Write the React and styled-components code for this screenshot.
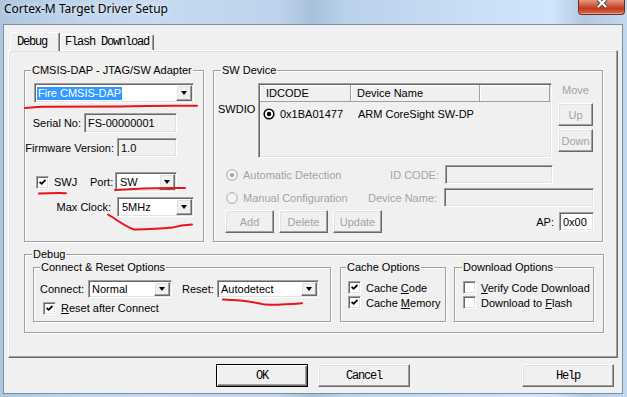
import React from 'react';
import styled, { createGlobalStyle, css } from 'styled-components';

const GlobalStyle = createGlobalStyle`
	* { box-sizing: border-box; }
	body { margin: 0; background: #fff; }
`;

const sunken = css`
	border: 1px solid;
	border-color: #a0a0a0 #fff #fff #a0a0a0;
	box-shadow: inset 1px 1px #696969, inset -1px -1px #e3e3e3;
`;

const raised = css`
	border: 1px solid;
	border-color: #fff #696969 #696969 #fff;
	box-shadow: inset -1px -1px #a0a0a0, inset 1px 1px #e3e3e3;
`;

const Window = styled.div`
	position: relative;
	width: 627px;
	height: 397px;
	display: flex;
	flex-direction: column;
	padding: 0 4px 3px 3px;
	overflow: hidden;
	background: linear-gradient(90deg, #aec5df 0%, #bcd2ea 10%, #c6dbf1 24%, #bfd4ec 44%, #a8c0dc 50%, #bad1ea 55%, #c9def5 74%, #d1e6fa 88%, #b3c9e2 93%, #c3d8ef 100%);
	font-family: "Liberation Sans", Arial, sans-serif;
	font-size: 11px;
	color: #000;
`;

const TitleBar = styled.div`
	height: 24px;
	display: flex;
	align-items: flex-start;
	justify-content: space-between;
	margin-right: -2px;
`;

const Title = styled.div`
	font-family: "Noto Sans", sans-serif;
	font-size: 12px;
	line-height: 16px;
	margin: 1px 0 0 1px;
	text-shadow: 0 0 6px rgba(255, 255, 255, .9);
`;

const CloseButton = styled.div`
	width: 47px;
	height: 15px;
	display: flex;
	justify-content: center;
	align-items: flex-start;
	overflow: hidden;
	border: 1px solid #6e2b22;
	border-top: none;
	border-radius: 0 0 4px 4px;
	background: linear-gradient(#e29a86 0%, #d4583f 40%, #c13b22 60%, #d86a4a 100%);
	box-shadow: inset 0 -1px rgba(255, 200, 180, .6);
`;

const Client = styled.div`
	flex: 1;
	display: flex;
	flex-direction: column;
	padding: 7px 4px 0 4px;
	background: #f0f0f0;
	border: 1px solid #7a8ea6;
`;

const TabStrip = styled.div`
	height: 18px;
	display: flex;
	align-items: flex-end;
	padding-left: 2px;
`;

const Tab = styled.div`
	position: relative;
	z-index: ${p => p.$active ? 2 : 1};
	width: ${p => p.$w}px;
	height: ${p => p.$active ? 19 : 16}px;
	margin-bottom: ${p => p.$active ? -1 : 0}px;
	padding: ${p => p.$active ? '2px 0 0 6px' : '0 0 0 4px'};
	background: #f0f0f0;
	border: 1px solid;
	border-bottom: none;
	border-color: #fff #696969 transparent #fff;
	border-radius: 2px 2px 0 0;
	box-shadow: inset -1px 0 #a0a0a0;
	font-family: "Liberation Mono", monospace;
	font-size: 12px;
	letter-spacing: -1.2px;
	line-height: 14px;
	white-space: nowrap;
`;

const TabPanel = styled.div`
	height: 308px;
	display: flex;
	flex-direction: column;
	padding: 12px 0 0 15px;
	${raised};
`;

const TopRow = styled.div`
	display: flex;
	gap: 9px;
`;

const Group = styled.fieldset`
	margin: ${p => p.$mt || 0}px 0 0 0;
	min-width: 0;
	width: ${p => p.$w}px;
	height: ${p => p.$h}px;
	padding: ${p => p.$pad};
	border: 1px solid #a0a0a0;
	box-shadow: inset 1px 1px #fff, 1px 1px #fff;
	flex-shrink: 0;
`;

const Legend = styled.legend`
	padding: 0 1px;
	margin-left: ${p => p.$ml || 0}px;
	line-height: ${p => p.$lh || 14}px;
	background: #f0f0f0;
	white-space: nowrap;
`;

const FormRow = styled.div`
	display: flex;
	align-items: ${p => p.$align || 'center'};
	height: ${p => p.$h}px;
	margin-top: ${p => p.$mt || 0}px;
	padding-right: ${p => p.$pr || 0}px;
	gap: ${p => p.$gap || 0}px;
`;

const Label = styled.span`
	flex-shrink: 0;
	width: ${p => p.$w ? `${p.$w}px` : 'auto'};
	margin-left: ${p => p.$ml || 0}px;
	padding-right: ${p => p.$pr || 0}px;
	text-align: ${p => p.$right ? 'right' : 'left'};
	line-height: 14px;
	white-space: nowrap;
	color: ${p => p.$off ? '#a3a3a3' : '#000'};
`;

const FillLabel = styled(Label)`
	flex: 1;
	text-align: right;
`;

const Combo = styled.div`
	flex-shrink: 0;
	width: ${p => p.$w}px;
	height: ${p => p.$h || 20}px;
	margin-left: ${p => p.$ml || 0}px;
	display: flex;
	align-items: center;
	padding: 1px;
	background: #fff;
	${sunken};
`;

const ComboValue = styled.span`
	flex: 1;
	padding-left: ${p => p.$pl ?? 3}px;
	line-height: 13px;
	white-space: nowrap;
	overflow: hidden;
`;

const Selection = styled.span`
	display: inline-block;
	padding: 0 1px;
	background: #3399ff;
	color: #fff;
`;

const DropButton = styled.span`
	width: 16px;
	align-self: stretch;
	display: flex;
	align-items: center;
	justify-content: center;
	background: #f0f0f0;
	${raised};

	&::after {
		content: '';
		border-left: 3.5px solid transparent;
		border-right: 3.5px solid transparent;
		border-top: 4px solid #000;
	}
`;

const TextBox = styled.div`
	flex-shrink: 0;
	width: ${p => p.$w}px;
	height: ${p => p.$h || 20}px;
	display: flex;
	align-items: center;
	padding-left: 3px;
	background: ${p => p.$white ? '#fff' : '#f0f0f0'};
	white-space: nowrap;
	${sunken};
`;

const CheckBox = styled.span`
	flex-shrink: 0;
	width: 13px;
	height: 13px;
	margin-left: ${p => p.$ml || 0}px;
	display: flex;
	align-items: center;
	justify-content: center;
	background: #fff;
	${sunken};
`;

const CheckItem = styled.div`
	display: flex;
	align-items: center;
	gap: 5px;
	height: 15px;
	white-space: nowrap;
	line-height: 14px;
`;

const RadioItem = styled.div`
	width: 150px;
	flex-shrink: 0;
	display: flex;
	align-items: center;
	gap: 5px;
	padding-left: 8px;
	color: #a3a3a3;
	white-space: nowrap;
`;

const SideLabel = styled.div`
	width: 40px;
	flex-shrink: 0;
	padding-top: 19px;
	line-height: 14px;
`;

const ListView = styled.div`
	width: 294px;
	height: 75px;
	flex-shrink: 0;
	padding: 1px;
	background: #f0f0f0;
	${sunken};
`;

const ListHeader = styled.div`
	display: flex;
	height: 17px;
	border-bottom: 1px solid #a0a0a0;
`;

const HeadCell = styled.div`
	width: ${p => p.$w}px;
	padding-left: ${p => p.$pl || 6}px;
	line-height: 16px;
	border-right: 1px solid #a0a0a0;
	box-shadow: inset 1px 1px #fff;
	white-space: nowrap;
`;

const ListRow = styled.div`
	display: flex;
	align-items: center;
	height: 16px;
	margin-top: 4px;
`;

const ListCell = styled.div`
	width: ${p => p.$w}px;
	padding-left: ${p => p.$pl}px;
	display: flex;
	align-items: center;
	gap: 5px;
	white-space: nowrap;
`;

const MoveColumn = styled.div`
	width: 35px;
	margin-left: 6px;
	display: flex;
	flex-direction: column;
`;

const MoveLabel = styled.div`
	line-height: 14px;
	text-align: center;
	color: #a3a3a3;
`;

const Button = styled.div`
	flex-shrink: 0;
	width: ${p => p.$w}px;
	height: 23px;
	margin-top: ${p => p.$mt || 0}px;
	margin-left: ${p => p.$ml || 0}px;
	display: flex;
	align-items: center;
	justify-content: center;
	background: #f0f0f0;
	color: ${p => p.$off ? '#a3a3a3' : '#000'};
	${raised};
`;

const DialogButton = styled(Button)`
	font-family: "Liberation Mono", monospace;
	font-size: 12px;
	letter-spacing: -1.2px;
	${p => p.$default && css`
		border: 1px solid #000;
		box-shadow: inset 1px 1px #fff, inset -1px -1px #696969, inset -2px -2px #a0a0a0;
	`}
`;

const Spacer = styled.div`
	flex: 1;
`;

const SubRow = styled.div`
	display: flex;
	gap: ${p => p.$gap}px;
`;

const ButtonBar = styled.div`
	display: flex;
	gap: 10px;
	margin-top: 6px;
	padding: 0 4px 0 208px;
`;

const Scribbles = styled.svg`
	position: absolute;
	top: 0;
	left: 0;
	pointer-events: none;
`;

function Check() {
	return (
		<svg width="7" height="7" viewBox="0 0 7 7">
			<path d="M0.6 2.8 L2.6 4.8 L6.4 1" fill="none" stroke="#000" strokeWidth="1.8" />
		</svg>
	);
}

function Radio({checked}) {
	return (
		<svg width="12" height="12" viewBox="0 0 12 12">
			<circle cx="6" cy="6" r="5.3" fill="#f4f4f4" stroke="#a8a8a8" />
			{checked && <circle cx="6" cy="6" r="2" fill="#a0a0a0" />}
		</svg>
	);
}

function Target() {
	return (
		<svg width="12" height="12" viewBox="0 0 12 12">
			<circle cx="6" cy="6" r="4.8" fill="#fff" stroke="#000" strokeWidth="1.6" />
			<circle cx="6" cy="6" r="2.2" fill="#000" />
		</svg>
	);
}

export default function App() {
	return (
		<>
			<GlobalStyle />
			<Window>
				<TitleBar>
					<Title>Cortex-M Target Driver Setup</Title>
					<CloseButton>
						<svg width="16" height="11" viewBox="0 0 16 11">
							<path d="M4 -1 L12 7 M12 -1 L4 7" stroke="#4a3a38" strokeWidth="4.2" />
							<path d="M4 -1 L12 7 M12 -1 L4 7" stroke="#fff" strokeWidth="2.4" />
						</svg>
					</CloseButton>
				</TitleBar>

				<Client>
					<TabStrip>
						<Tab $active $w={50}>Debug</Tab>
						<Tab $w={94}>Flash Download</Tab>
					</TabStrip>

					<TabPanel>
						<TopRow>
							<Group $w={180} $h={179} $pad="6px 6px 0 6px">
								<Legend>CMSIS-DAP - JTAG/SW Adapter</Legend>
								<FormRow $h={20}>
									<Combo $w={160} $ml={3}>
										<ComboValue $pl={1}><Selection>Fire CMSIS-DAP</Selection></ComboValue>
										<DropButton />
									</Combo>
								</FormRow>
								<FormRow $h={20} $mt={10}>
									<Label $w={53} $pr={3} $right>Serial No:</Label>
									<TextBox $w={93}>FS-00000001</TextBox>
								</FormRow>
								<FormRow $h={19} $mt={5}>
									<Label $w={92} $ml={-6} $pr={3} $right>Firmware Version:</Label>
									<TextBox $w={60} $h={19}>1.0</TextBox>
								</FormRow>
								<FormRow $h={20} $mt={15}>
									<CheckBox $ml={5}><Check /></CheckBox>
									<Label $w={36} $ml={5}>SWJ</Label>
									<Label $w={25} $pr={2} $right>Port:</Label>
									<Combo $w={62}>
										<ComboValue>SW</ComboValue>
										<DropButton />
									</Combo>
								</FormRow>
								<FormRow $h={20} $mt={5}>
									<Label $w={86} $pr={6} $right>Max Clock:</Label>
									<Combo $w={77}>
										<ComboValue>5MHz</ComboValue>
										<DropButton />
									</Combo>
								</FormRow>
							</Group>

							<Group $w={390} $h={179} $pad="6px 8px 0 4px">
								<Legend $ml={3}>SW Device</Legend>
								<FormRow $h={75} $align="flex-start">
									<SideLabel>SWDIO</SideLabel>
									<ListView>
										<ListHeader>
											<HeadCell $w={91}>IDCODE</HeadCell>
											<HeadCell $w={129}>Device Name</HeadCell>
											<HeadCell $w={70} />
										</ListHeader>
										<ListRow>
											<ListCell $w={91} $pl={3}><Target />0x1BA01477</ListCell>
											<ListCell $w={129} $pl={7}>ARM CoreSight SW-DP</ListCell>
										</ListRow>
									</ListView>
									<MoveColumn>
										<MoveLabel>Move</MoveLabel>
										<Button $w={35} $mt={6} $off>Up</Button>
										<Button $w={35} $mt={3} $off>Down</Button>
									</MoveColumn>
								</FormRow>
								<FormRow $h={19} $mt={7} $pr={41}>
									<RadioItem><Radio checked />Automatic Detection</RadioItem>
									<FillLabel $pr={6} $off>ID CODE:</FillLabel>
									<TextBox $w={108} $h={19} />
								</FormRow>
								<FormRow $h={19} $mt={4}>
									<RadioItem><Radio />Manual Configuration</RadioItem>
									<FillLabel $pr={7} $off>Device Name:</FillLabel>
									<TextBox $w={150} $h={19} />
								</FormRow>
								<FormRow $h={23} $mt={3} $gap={5}>
									<Button $w={49} $ml={7} $off>Add</Button>
									<Button $w={49} $off>Delete</Button>
									<Button $w={49} $off>Update</Button>
									<Spacer />
									<Label>AP:</Label>
									<TextBox $w={35} $h={19} $white>0x00</TextBox>
								</FormRow>
							</Group>
						</TopRow>

						<Group $w={580} $h={85} $mt={6} $pad="0 8px 0 8px">
							<Legend $ml={-1} $lh={12}>Debug</Legend>
							<SubRow $gap={9}>
								<Group $w={298} $h={62} $pad="6px 6px 0 6px">
									<Legend>Connect &amp; Reset Options</Legend>
									<FormRow $h={18}>
										<Label $w={48}>Connect:</Label>
										<Combo $w={84} $h={18}>
											<ComboValue $pl={2}>Normal</ComboValue>
											<DropButton />
										</Combo>
										<Label $w={35} $ml={10}>Reset:</Label>
										<Combo $w={102} $h={18}>
											<ComboValue $pl={2}>Autodetect</ComboValue>
											<DropButton />
										</Combo>
									</FormRow>
									<FormRow $h={14} $mt={3}>
										<CheckItem>
											<CheckBox $ml={3}><Check /></CheckBox>
											<span><u>R</u>eset after Connect</span>
										</CheckItem>
									</FormRow>
								</Group>
								<SubRow $gap={8}>
									<Group $w={106} $h={62} $pad="6px 5px 0 5px">
										<Legend>Cache Options</Legend>
										<CheckItem>
											<CheckBox $ml={2}><Check /></CheckBox>
											<span>Cache <u>C</u>ode</span>
										</CheckItem>
										<CheckItem>
											<CheckBox $ml={2}><Check /></CheckBox>
											<span>Cache <u>M</u>emory</span>
										</CheckItem>
									</Group>
									<Group $w={140} $h={62} $pad="6px 7px 0 7px">
										<Legend>Download Options</Legend>
										<CheckItem>
											<CheckBox $ml={1} />
											<span><u>V</u>erify Code Download</span>
										</CheckItem>
										<CheckItem>
											<CheckBox $ml={1} />
											<span>Download to <u>F</u>lash</span>
										</CheckItem>
									</Group>
								</SubRow>
							</SubRow>
						</Group>
					</TabPanel>

					<ButtonBar>
						<DialogButton $w={92} $default>OK</DialogButton>
						<DialogButton $w={92}>Cancel</DialogButton>
						<Spacer />
						<DialogButton $w={92}>Help</DialogButton>
					</ButtonBar>
				</Client>

				<Scribbles width="627" height="397" viewBox="0 0 627 397">
					<g fill="none" stroke="#e8141b" strokeWidth="2" strokeLinecap="round" strokeLinejoin="round">
						<path d="M25 108 C32 107.5 36 107 42 106.8 L120 106.4 C150 105.6 175 105.6 197 105.8" />
						<path d="M39 193.6 C48 193.2 58 193 66 193.2" />
						<path d="M115 190 C135 188.5 160 187.6 185 188" />
						<path d="M108 214.5 C116 219 124 226 134 229.5 C148 229.4 165 228.4 172 227.6 C178 226 184 225 192 224.6" />
						<path d="M223 299.6 C238 300 252 301.5 265 304.6 C278 305 292 304 302 303.2" />
					</g>
				</Scribbles>
			</Window>
		</>
	);
}
